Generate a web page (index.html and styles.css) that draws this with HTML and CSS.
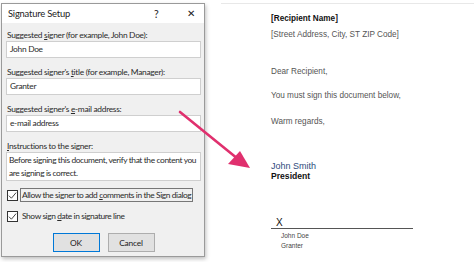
FILE: index.html
```html
<!DOCTYPE html>
<html lang="en">
<head>
    <meta charset="UTF-8">
    <title>Signature Setup</title>
    <link rel="stylesheet" href="styles.css">
</head>
<body>

<div class="screen">
    <!-- Dialóg -->
    <div class="dialog">
        <div class="titlebar">
            <span class="title">Signature Setup</span>
            <span class="help">?</span>
            <span class="close">&#x2715;</span>
        </div>
        <div class="dialog-body">
            <label class="field-label">Suggested <u>s</u>igner (for example, John Doe):</label>
            <div class="input">John Doe</div>
            <label class="field-label">Suggested signer's <u>t</u>itle (for example, Manager):</label>
            <div class="input">Granter</div>
            <label class="field-label">Suggested signer's <u>e</u>-mail address:</label>
            <div class="input">e-mail address</div>
            <label class="field-label"><u>I</u>nstructions to the signer:</label>
            <div class="input textarea">Before signing this document, verify that the content you are signing is correct.</div>

            <div class="check-row first">
                <span class="checkbox"><svg viewBox="0 0 10 10" width="9" height="9"><path d="M1 5.2 L3.8 8 L9 1.8" fill="none" stroke="#333" stroke-width="1"/></svg></span>
                <span class="check-label focused">Allow the signer to add <u>c</u>omments in the Sign dialog</span>
            </div>
            <div class="check-row">
                <span class="checkbox"><svg viewBox="0 0 10 10" width="9" height="9"><path d="M1 5.2 L3.8 8 L9 1.8" fill="none" stroke="#333" stroke-width="1"/></svg></span>
                <span class="check-label">Show sign <u>d</u>ate in signature line</span>
            </div>

            <div class="buttons">
                <button class="btn default">OK</button>
                <button class="btn">Cancel</button>
            </div>
        </div>
    </div>

    <!-- Dokument -->
    <div class="document">
        <p class="recipient">[Recipient Name]</p>
        <p class="address">[Street Address, City, ST ZIP Code]</p>
        <p class="greeting">Dear Recipient,</p>
        <p class="line">You must sign this document below,</p>
        <p class="line regards">Warm regards,</p>
        <p class="sender">John Smith</p>
        <p class="position">President</p>

        <div class="sigline">
            <div class="sig-x">X</div>
            <div class="sig-name">John Doe</div>
            <div class="sig-name">Granter</div>
        </div>
    </div>

    <!-- Šípka -->
    <svg class="arrow" width="90" height="70" viewBox="0 0 90 70">
        <path d="M4 4 L62 51" stroke="#e0306e" stroke-width="2.6" stroke-linecap="round" fill="none"/>
        <path d="M74 60 L52 56 L64 43 Z" fill="#e0306e"/>
    </svg>
</div>

</body>
</html>
```

FILE: styles.css
```css
body {
    margin: 0;
    padding: 0;
    background-color: #fff;
    font-family: 'Lato', sans-serif;
}
.screen {
    position: relative;
    width: 474px;
    height: 262px;
    overflow: hidden;
    display: flex;
    background-color: #fff;
}
.dialog {
    margin-top: 3px;
    margin-left: 1px;
    width: 204px;
    height: 254px;
    box-sizing: border-box;
    border: 1px solid #9a9a9a;
    background-color: #f0f0f0;
    box-shadow: 1px 2px 4px rgba(0, 0, 0, 0.25);
    flex-shrink: 0;
    display: flex;
    flex-direction: column;
}
.titlebar {
    height: 19px;
    background-color: #fff;
    display: flex;
    align-items: center;
    padding-left: 6px;
    font-size: 9.4px;
    letter-spacing: -0.2px;
    color: #222;
}
.title {
    flex: 1;
}
.help {
    width: 10px;
    margin-right: 23px;
    font-size: 10.5px;
}
.close {
    width: 10px;
    margin-right: 7px;
    font-size: 9.5px;
}
.dialog-body {
    padding: 6px 3px 0 4px;
    font-size: 8.4px;
    letter-spacing: -0.3px;
    color: #2a2a2a;
}
.field-label {
    display: block;
    padding-left: 1px;
    margin-top: 8px;
    line-height: 12px;
    height: 12px;
}
.field-label:first-child {
    margin-top: 0;
}
.input {
    background-color: #fff;
    border: 1px solid #cfcfcf;
    height: 15px;
    line-height: 15px;
    padding-left: 3px;
}
.textarea {
    height: 26px;
    line-height: 13px;
    padding-top: 1px;
    padding-left: 2px;
    letter-spacing: -0.38px;
}
.check-row {
    display: flex;
    align-items: center;
    margin-top: 5px;
    height: 16px;
}
.check-row.first {
    margin-top: 6px;
}
.checkbox {
    width: 9px;
    height: 9px;
    border: 1px solid #333;
    background-color: #fff;
    display: flex;
    align-items: center;
    justify-content: center;
    margin-left: 1px;
    margin-right: 2px;
}
.check-label {
    padding: 1px 1px;
    border: 1px solid transparent;
    white-space: nowrap;
    letter-spacing: -0.4px;
}
.focused {
    border: 1px solid #777;
}
.buttons {
    display: flex;
    justify-content: center;
    gap: 8px;
    margin-top: 9px;
}
.btn {
    width: 47px;
    height: 19px;
    font-family: 'Lato', sans-serif;
    font-size: 8.4px;
    letter-spacing: -0.2px;
    color: #222;
    background-color: #e1e1e1;
    border: 1px solid #adadad;
    padding: 0;
}
.default {
    border: 1px solid #0078d7;
}
.document {
    flex: 1;
    margin-top: 3px;
    margin-left: 16px;
    border-top: 1px solid #e8e8e8;
    padding-left: 50px;
    font-family: 'Liberation Sans', sans-serif;
    font-size: 8.2px;
    color: #555;
}
.document p {
    margin: 0;
}
.recipient {
    margin-top: 10px !important;
    font-weight: bold;
    color: #111;
}
.address {
    margin-top: 7px !important;
}
.greeting {
    margin-top: 28px !important;
}
.line {
    margin-top: 15px !important;
}
.regards {
    margin-top: 17px !important;
}
.sender {
    margin-top: 35px !important;
    color: #2f4a7c;
    font-size: 9px;
}
.position {
    margin-top: 0 !important;
    font-weight: bold;
    color: #111;
    font-size: 8.6px;
}
.sigline {
    margin-top: 36px;
    width: 142px;
}
.sig-x {
    font-size: 10px;
    color: #111;
    padding-left: 5px;
    border-bottom: 1px solid #555;
    line-height: 11px;
}
.sig-name {
    font-size: 6.5px;
    color: #444;
    padding-left: 10px;
    margin-top: 3px;
}
.arrow {
    position: absolute;
    left: 176px;
    top: 108px;
}
```
